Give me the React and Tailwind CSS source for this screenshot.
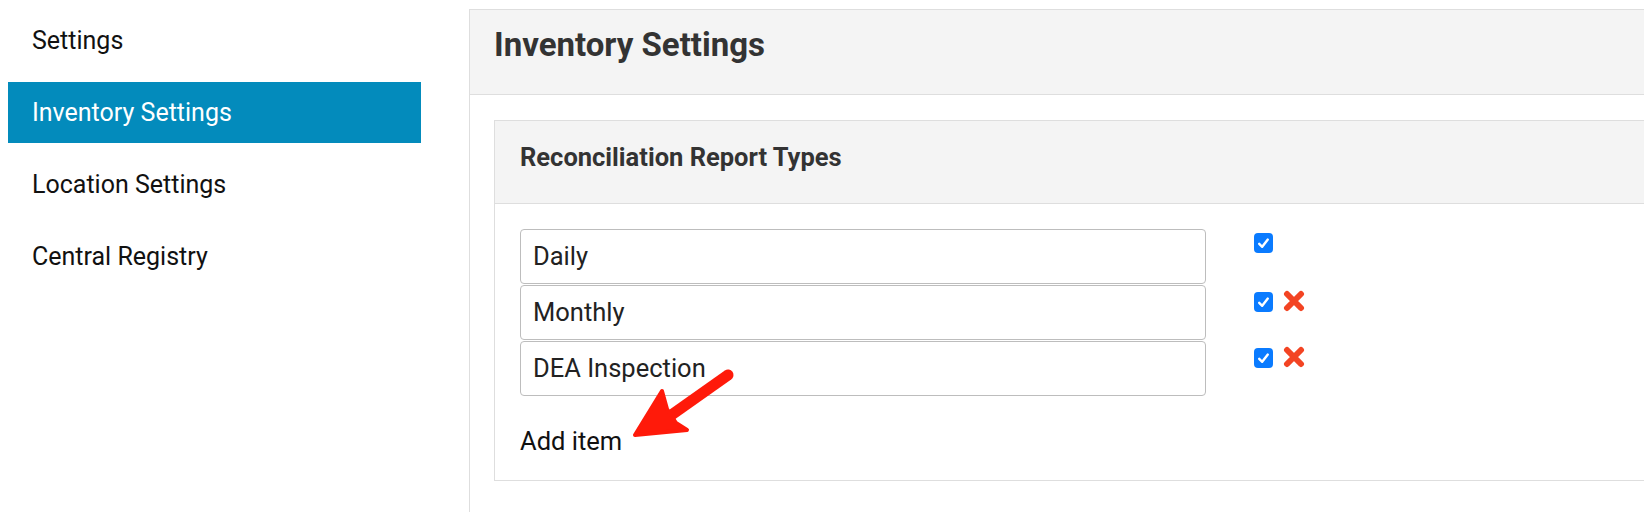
import React from "react";

const navItems = ["Settings", "Inventory Settings", "Location Settings", "Central Registry"];

const rows = [
  { label: "Daily", removable: false, offset: "mt-[4px]" },
  { label: "Monthly", removable: true, offset: "mt-[7px]" },
  { label: "DEA Inspection", removable: true, offset: "mt-[7px]" },
];

function CheckBox({ className }) {
  return (
    <div className={"w-[19px] h-[20px] rounded-[4px] bg-[#0a7bff] flex items-center justify-center " + className}>
      <svg width="13" height="13" viewBox="0 0 13 13">
        <path d="M2.2 6.8 L5.2 9.8 L10.8 2.6" fill="none" stroke="white" strokeWidth="2.4" strokeLinecap="round" strokeLinejoin="round" />
      </svg>
    </div>
  );
}

function RemoveIcon() {
  return (
    <svg width="22" height="22" viewBox="0 0 22 22" className="mt-[5px] ml-[10px]">
      <path d="M4 4 L18 18 M18 4 L4 18" stroke="#f34423" strokeWidth="6" strokeLinecap="round" />
    </svg>
  );
}

export default function App() {
  return (
    <div className="relative flex h-[512px] w-full overflow-hidden bg-white font-['Roboto',sans-serif]">
      {/* sidebar */}
      <div className="pl-2 pt-[10px] flex flex-col gap-[11px]">
        {navItems.map((item) => (
          <div
            key={item}
            className={
              "w-[413px] h-[61px] flex items-center pl-6 text-[25px] " +
              (item === "Inventory Settings" ? "bg-[#038bbc] text-white" : "text-[#111]")
            }
          >
            {item}
          </div>
        ))}
      </div>

      {/* main panel */}
      <div className="ml-[48px] mt-[9px] flex-1 border-l border-t border-[#dedede]">
        <div className="h-[85px] bg-[#f4f4f4] border-b border-[#dedede] pl-6 pt-[18px]">
          <h1 className="text-[33px] leading-none font-bold text-[#333]">Inventory Settings</h1>
        </div>

        <div className="ml-6 mt-[25px] border-l border-t border-b border-[#dedede]">
          <div className="h-[83px] bg-[#f4f4f4] border-b border-[#dedede] pl-[25px] pt-[24px]">
            <h2 className="text-[25.5px] leading-none font-bold text-[#333]">Reconciliation Report Types</h2>
          </div>

          <div className="pl-[25px] pt-[25px] pb-[25px]">
            <div className="flex flex-col gap-[1px]">
              {rows.map((row) => (
                <div key={row.label} className="flex items-start">
                  <div className="w-[686px] h-[55px] border border-[#bdbdbd] rounded-[4px] flex items-center pl-3 text-[25.5px] text-[#222]">
                    {row.label}
                  </div>
                  <div className="ml-[48px] flex items-start">
                    <CheckBox className={row.offset} />
                    {row.removable && <RemoveIcon />}
                  </div>
                </div>
              ))}
            </div>
            <div className="mt-[33px] text-[25.5px] leading-none text-[#111]">Add item</div>
          </div>
        </div>
      </div>

      {/* annotation arrow */}
      <svg className="absolute left-[620px] top-[360px]" width="120" height="90" viewBox="0 0 120 90">
        <line x1="108" y1="15" x2="50" y2="56" stroke="#ff1a0a" strokeWidth="11" strokeLinecap="round" />
        <path
          d="M15 75 L42 31 L47 49 L56 63 L67 70 Z"
          fill="#ff1a0a"
          stroke="#ff1a0a"
          strokeWidth="4"
          strokeLinejoin="round"
        />
      </svg>
    </div>
  );
}
